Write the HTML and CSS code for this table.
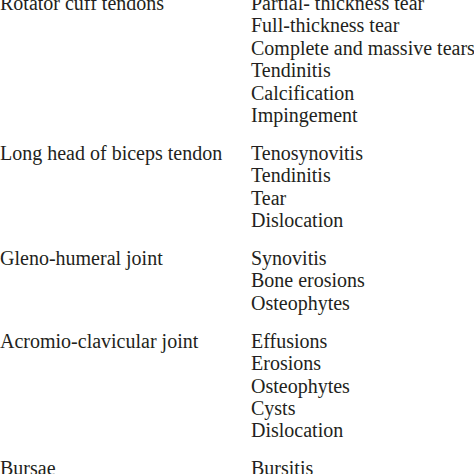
FILE: index.html
```html
<!DOCTYPE html>
<html>
<head>
<meta charset="utf-8">
<link rel="stylesheet" href="styles.css">
</head>
<body>
<div class="table">
  <div class="row">
    <div class="site">Rotator cuff tendons</div>
    <div class="findings">
      <div>Partial- thickness tear</div>
      <div>Full-thickness tear</div>
      <div>Complete and massive tears</div>
      <div>Tendinitis</div>
      <div>Calcification</div>
      <div>Impingement</div>
    </div>
  </div>
  <div class="row">
    <div class="site">Long head of biceps tendon</div>
    <div class="findings">
      <div>Tenosynovitis</div>
      <div>Tendinitis</div>
      <div>Tear</div>
      <div>Dislocation</div>
    </div>
  </div>
  <div class="row">
    <div class="site">Gleno-humeral joint</div>
    <div class="findings">
      <div>Synovitis</div>
      <div>Bone erosions</div>
      <div>Osteophytes</div>
    </div>
  </div>
  <div class="row">
    <div class="site">Acromio-clavicular joint</div>
    <div class="findings">
      <div>Effusions</div>
      <div>Erosions</div>
      <div>Osteophytes</div>
      <div>Cysts</div>
      <div>Dislocation</div>
    </div>
  </div>
  <div class="row">
    <div class="site">Bursae</div>
    <div class="findings">
      <div>Bursitis</div>
    </div>
  </div>
</div>
</body>
</html>
```
FILE: styles.css
```css
html, body {
  margin: 0;
  padding: 0;
  background: #fff;
  overflow: hidden;
}
body {
  width: 474px;
  height: 474px;
  font-family: "Liberation Serif", "Times New Roman", serif;
  font-size: 20px;
  line-height: 22.4px;
  color: #231f20;
}
.table {
  display: flex;
  flex-direction: column;
  gap: 15.5px;
  margin-top: -8px;
}
.row {
  display: grid;
  grid-template-columns: 251px 1fr;
}
.site {
  white-space: nowrap;
}
.findings {
  white-space: nowrap;
}
```
